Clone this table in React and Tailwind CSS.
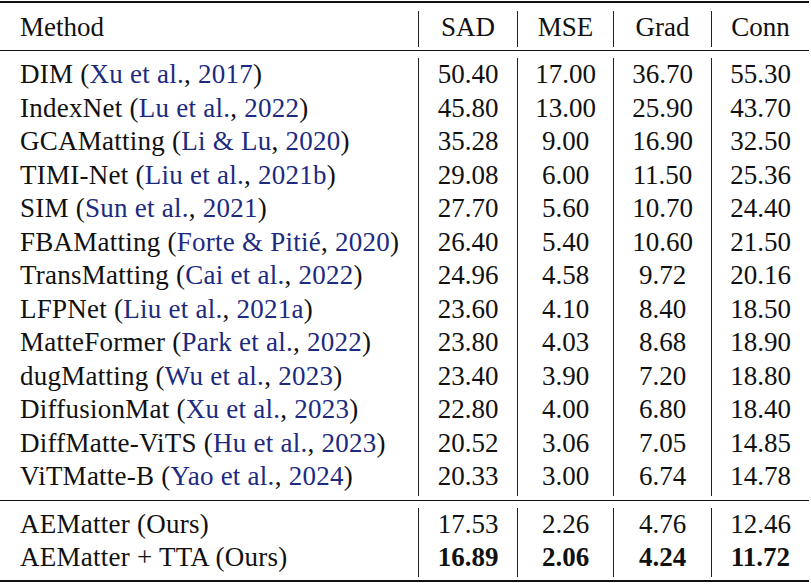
const rows = [
  ["DIM", "Xu et al.", "2017", "50.40", "17.00", "36.70", "55.30"],
  ["IndexNet", "Lu et al.", "2022", "45.80", "13.00", "25.90", "43.70"],
  ["GCAMatting", "Li & Lu", "2020", "35.28", "9.00", "16.90", "32.50"],
  ["TIMI-Net", "Liu et al.", "2021b", "29.08", "6.00", "11.50", "25.36"],
  ["SIM", "Sun et al.", "2021", "27.70", "5.60", "10.70", "24.40"],
  ["FBAMatting", "Forte & Pitié", "2020", "26.40", "5.40", "10.60", "21.50"],
  ["TransMatting", "Cai et al.", "2022", "24.96", "4.58", "9.72", "20.16"],
  ["LFPNet", "Liu et al.", "2021a", "23.60", "4.10", "8.40", "18.50"],
  ["MatteFormer", "Park et al.", "2022", "23.80", "4.03", "8.68", "18.90"],
  ["dugMatting", "Wu et al.", "2023", "23.40", "3.90", "7.20", "18.80"],
  ["DiffusionMat", "Xu et al.", "2023", "22.80", "4.00", "6.80", "18.40"],
  ["DiffMatte-ViTS", "Hu et al.", "2023", "20.52", "3.06", "7.05", "14.85"],
  ["ViTMatte-B", "Yao et al.", "2024", "20.33", "3.00", "6.74", "14.78"],
];

const ours = [
  { name: "AEMatter (Ours)", vals: ["17.53", "2.26", "4.76", "12.46"], bold: false },
  { name: "AEMatter + TTA (Ours)", vals: ["16.89", "2.06", "4.24", "11.72"], bold: true },
];

const gridCols = "grid grid-cols-[418px_99px_96px_98px_98px]";

const Cell = ({ children, bold }) => (
  <div
    className={`flex items-center justify-center pb-[2px] border-l border-[#222] ${
      bold ? "font-bold" : ""
    }`}
  >
    {children}
  </div>
);

const Cite = ({ author, year }) => (
  <>
    {" ("}
    <span className="text-[#1c2a80]">{author}</span>
    {", "}
    <span className="text-[#1c2a80]">{year}</span>
    {")"}
  </>
);

export default function App() {
  return (
    <div className="w-[811px] h-[586px] bg-white pt-px text-[#111] text-[27px] leading-[33.5px] font-['Liberation_Serif','Tinos','DejaVu_Serif',serif]">
      <div className="w-[809px]">
        {/* top rule */}
        <div className="h-[2px] bg-[#111]" />

        {/* header */}
        <div className={`${gridCols} mt-[8px] h-[32px]`}>
          <div className="flex items-center pl-[20px] pb-[2px]">Method</div>
          <Cell>SAD</Cell>
          <Cell>MSE</Cell>
          <Cell>Grad</Cell>
          <Cell>Conn</Cell>
        </div>

        <div className="mt-[7px] h-px bg-[#111]" />

        {/* body */}
        <div className="mt-[7px]">
          {rows.map((r) => (
            <div key={r[0]} className={`${gridCols} h-[33.5px]`}>
              <div className="flex items-center pl-[20px] pb-[2px] whitespace-nowrap tracking-[0.25px]">
                <span>
                  {r[0]}
                  <Cite author={r[1]} year={r[2]} />
                </span>
              </div>
              <Cell>{r[3]}</Cell>
              <Cell>{r[4]}</Cell>
              <Cell>{r[5]}</Cell>
              <Cell>{r[6]}</Cell>
            </div>
          ))}
        </div>

        <div className="mt-[6px] h-px bg-[#111]" />

        {/* ours */}
        <div className="mt-[7px]">
          {ours.map((o) => (
            <div key={o.name} className={`${gridCols} h-[33.5px]`}>
              <div className="flex items-center pl-[20px] pb-[2px] whitespace-nowrap tracking-[0.25px]">
                {o.name}
              </div>
              {o.vals.map((v, i) => (
                <Cell key={i} bold={o.bold}>
                  {v}
                </Cell>
              ))}
            </div>
          ))}
        </div>

        {/* bottom rule */}
        <div className="mt-[5px] h-[2px] bg-[#111]" />
      </div>
    </div>
  );
}
